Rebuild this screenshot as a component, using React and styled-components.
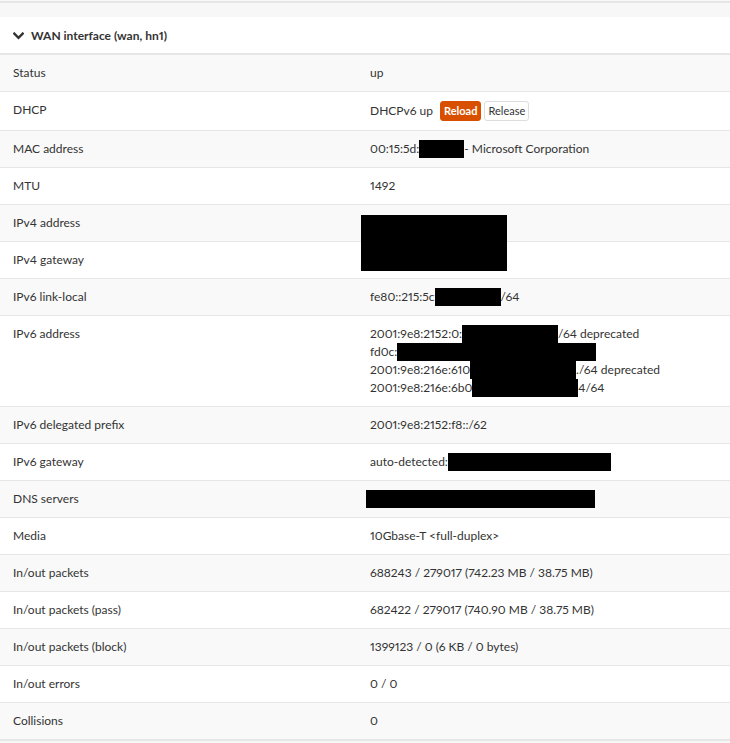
import styled, { createGlobalStyle } from 'styled-components'

const GlobalStyle = createGlobalStyle`
    html, body {
        margin: 0;
        padding: 0;
        background: #fff;
    }
    body {
        font-family: Lato, "Open Sans", sans-serif;
        font-size: 12px;
        font-feature-settings: "pnum";
        color: #333;
    }
`

// [text before, redacted width, text after, redaction shift]
const rows = [
    { label: 'Status', value: ['up'] },
    { label: 'DHCP', dhcp: true },
    { label: 'MAC address', value: [[ '00:15:5d:', 45, '- Microsoft Corporation' ]] },
    { label: 'MTU', value: ['1492'] },
    { label: 'IPv4 address', ipv4: true },
    { label: 'IPv4 gateway', value: [''] },
    { label: 'IPv6 link-local', value: [[ 'fe80::215:5c', 66, '/64' ]] },
    {
        label: 'IPv6 address',
        value: [
            [ '2001:9e8:2152:0:', 96, '/64 deprecated' ],
            [ 'fd0c:', 199, '' ],
            [ '2001:9e8:216e:610', 106, './64 deprecated' ],
            [ '2001:9e8:216e:6b0', 106, '4/64' ],
        ],
    },
    { label: 'IPv6 delegated prefix', value: ['2001:9e8:2152:f8::/62'] },
    { label: 'IPv6 gateway', value: [[ 'auto-detected:', 163, '' ]] },
    { label: 'DNS servers', value: [[ '', 229, '', -4 ]] },
    { label: 'Media', value: ['10Gbase-T <full-duplex>'] },
    { label: 'In/out packets', value: ['688243 / 279017 (742.23 MB / 38.75 MB)'] },
    { label: 'In/out packets (pass)', value: ['682422 / 279017 (740.90 MB / 38.75 MB)'] },
    { label: 'In/out packets (block)', value: ['1399123 / 0 (6 KB / 0 bytes)'] },
    { label: 'In/out errors', value: ['0 / 0'] },
    { label: 'Collisions', value: ['0'] },
]

const Line = ({ item }) => {
    if (typeof item === 'string') return <TextLine>{item || '\u00a0'}</TextLine>
    const [before, width, after, shift = 0] = item
    return (
        <TextLine>
            {before}
            <Redact $w={width} $shift={shift} />
            {after}
        </TextLine>
    )
}

const Chevron = () => (
    <svg width="11" height="8" viewBox="0 0 11 8" fill="none" xmlns="http://www.w3.org/2000/svg">
        <path d="M1.3 1.6L5.5 5.8L9.7 1.6" stroke="#333" strokeWidth="2.4" strokeLinecap="square" />
    </svg>
)

const App = () => {
    return (
        <Wrapper>
            <GlobalStyle />
            <TopBand />
            <Panel>
                <Header>
                    <Chevron />
                    <Title>WAN interface (wan, hn1)</Title>
                </Header>

                {rows.map((row) => (
                    <Row key={row.label}>
                        <Label>{row.label}</Label>
                        <Value>
                            {row.dhcp ? (
                                <DhcpLine>
                                    DHCPv6 up
                                    <Button $primary>Reload</Button>
                                    <Button>Release</Button>
                                </DhcpLine>
                            ) : row.ipv4 ? (
                                <>
                                    <TextLine>{'\u00a0'}</TextLine>
                                    <BigRedact />
                                </>
                            ) : (
                                row.value.map((item, i) => <Line key={i} item={item} />)
                            )}
                        </Value>
                    </Row>
                ))}
            </Panel>
            <BottomBand />
        </Wrapper>
    )
}

export default App

const Wrapper = styled.div`
    width: 730px;
    min-height: 743px;
    background: #f7f7f7;
    padding-top: 1px;
`

const TopBand = styled.div`
    height: 14px;
    border-top: 2px solid #e6e6e6;
    background: #f7f7f7;
`

const Panel = styled.div`
    background: #fff;
`

const Header = styled.div`
    display: flex;
    align-items: center;
    gap: 7px;
    box-sizing: border-box;
    height: 38px;
    padding: 1px 13px 0;
    border-bottom: 2px solid #e6e6e6;
`

const Title = styled.span`
    font-weight: 700;
    font-size: 12px;
    color: #333;
`

const Row = styled.div`
    display: grid;
    grid-template-columns: 357px 1fr;
    padding: 9px 13px;
    line-height: 18px;
    border-bottom: 1px solid #e6e6e6;
    background: #fff;

    &:nth-child(even) {
        background: #f9f9f9;
    }
`

const Label = styled.div`
    color: #333;
`

const Value = styled.div`
    position: relative;
    color: #333;
`

const TextLine = styled.div`
    white-space: nowrap;
    height: 18px;
`

const Redact = styled.span`
    display: inline-block;
    vertical-align: top;
    width: ${(p) => p.$w}px;
    height: 18px;
    margin-left: ${(p) => p.$shift}px;
    background: #000;
`

const BigRedact = styled.div`
    position: absolute;
    left: -9px;
    top: 1px;
    width: 146px;
    height: 56px;
    background: #000;
`

const DhcpLine = styled.div`
    display: flex;
    align-items: center;
    height: 20px;
    white-space: nowrap;
`

const Button = styled.span`
    display: inline-flex;
    align-items: center;
    height: 20px;
    box-sizing: border-box;
    padding: 0 3px;
    margin-left: ${(p) => (p.$primary ? '7px' : '3px')};
    border-radius: 3px;
    font-size: 11px;
    font-weight: ${(p) => (p.$primary ? 700 : 400)};
    color: ${(p) => (p.$primary ? '#fff' : '#333')};
    background: ${(p) => (p.$primary ? '#d94f00' : '#fff')};
    border: 1px solid ${(p) => (p.$primary ? '#d94f00' : '#ddd')};
`

const BottomBand = styled.div`
    border-top: 1px solid #e6e6e6;
    height: 4px;
    background: #f7f7f7;
`
